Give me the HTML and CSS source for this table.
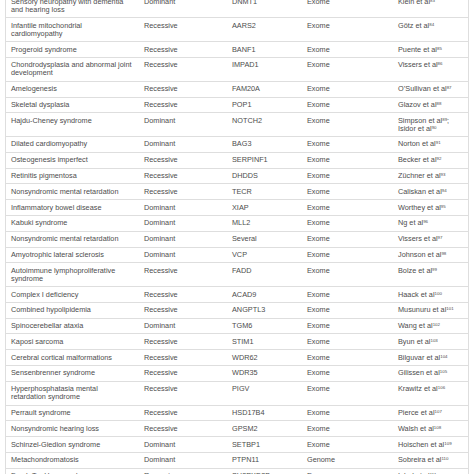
FILE: index.html
```html
<!DOCTYPE html>
<html>
<head>
<meta charset="utf-8">
<link rel="stylesheet" href="styles.css">
</head>
<body>
<div class="sheet">
<table class="genes">
<colgroup><col class="c1"><col class="c2"><col class="c3"><col class="c4"><col class="c5"></colgroup>
<tbody>
<tr><td>Sensory neuropathy with dementia<br>and hearing loss</td><td>Dominant</td><td>DNMT1</td><td>Exome</td><td>Klein et al<sup>83</sup></td></tr>
<tr><td>Infantile mitochondrial<br>cardiomyopathy</td><td>Recessive</td><td>AARS2</td><td>Exome</td><td>Götz et al<sup>84</sup></td></tr>
<tr><td>Progeroid syndrome</td><td>Recessive</td><td>BANF1</td><td>Exome</td><td>Puente et al<sup>85</sup></td></tr>
<tr><td>Chondrodysplasia and abnormal joint<br>development</td><td>Recessive</td><td>IMPAD1</td><td>Exome</td><td>Vissers et al<sup>86</sup></td></tr>
<tr><td>Amelogenesis</td><td>Recessive</td><td>FAM20A</td><td>Exome</td><td>O’Sullivan et al<sup>87</sup></td></tr>
<tr><td>Skeletal dysplasia</td><td>Recessive</td><td>POP1</td><td>Exome</td><td>Glazov et al<sup>88</sup></td></tr>
<tr><td>Hajdu-Cheney syndrome</td><td>Dominant</td><td>NOTCH2</td><td>Exome</td><td>Simpson et al<sup>89</sup>;<br>Isidor et al<sup>90</sup></td></tr>
<tr><td>Dilated cardiomyopathy</td><td>Dominant</td><td>BAG3</td><td>Exome</td><td>Norton et al<sup>91</sup></td></tr>
<tr><td>Osteogenesis imperfect</td><td>Recessive</td><td>SERPINF1</td><td>Exome</td><td>Becker et al<sup>92</sup></td></tr>
<tr><td>Retinitis pigmentosa</td><td>Recessive</td><td>DHDDS</td><td>Exome</td><td>Züchner et al<sup>93</sup></td></tr>
<tr><td>Nonsyndromic mental retardation</td><td>Recessive</td><td>TECR</td><td>Exome</td><td>Caliskan et al<sup>94</sup></td></tr>
<tr><td>Inflammatory bowel disease</td><td>Dominant</td><td>XIAP</td><td>Exome</td><td>Worthey et al<sup>95</sup></td></tr>
<tr><td>Kabuki syndrome</td><td>Dominant</td><td>MLL2</td><td>Exome</td><td>Ng et al<sup>96</sup></td></tr>
<tr><td>Nonsyndromic mental retardation</td><td>Dominant</td><td>Several</td><td>Exome</td><td>Vissers et al<sup>97</sup></td></tr>
<tr><td>Amyotrophic lateral sclerosis</td><td>Dominant</td><td>VCP</td><td>Exome</td><td>Johnson et al<sup>98</sup></td></tr>
<tr><td>Autoimmune lymphoproliferative<br>syndrome</td><td>Recessive</td><td>FADD</td><td>Exome</td><td>Bolze et al<sup>99</sup></td></tr>
<tr><td>Complex I deficiency</td><td>Recessive</td><td>ACAD9</td><td>Exome</td><td>Haack et al<sup>100</sup></td></tr>
<tr><td>Combined hypolipidemia</td><td>Recessive</td><td>ANGPTL3</td><td>Exome</td><td>Musunuru et al<sup>101</sup></td></tr>
<tr><td>Spinocerebellar ataxia</td><td>Dominant</td><td>TGM6</td><td>Exome</td><td>Wang et al<sup>102</sup></td></tr>
<tr><td>Kaposi sarcoma</td><td>Recessive</td><td>STIM1</td><td>Exome</td><td>Byun et al<sup>103</sup></td></tr>
<tr><td>Cerebral cortical malformations</td><td>Recessive</td><td>WDR62</td><td>Exome</td><td>Bilguvar et al<sup>104</sup></td></tr>
<tr><td>Sensenbrenner syndrome</td><td>Recessive</td><td>WDR35</td><td>Exome</td><td>Gilissen et al<sup>105</sup></td></tr>
<tr><td>Hyperphosphatasia mental<br>retardation syndrome</td><td>Recessive</td><td>PIGV</td><td>Exome</td><td>Krawitz et al<sup>106</sup></td></tr>
<tr><td>Perrault syndrome</td><td>Recessive</td><td>HSD17B4</td><td>Exome</td><td>Pierce et al<sup>107</sup></td></tr>
<tr><td>Nonsyndromic hearing loss</td><td>Recessive</td><td>GPSM2</td><td>Exome</td><td>Walsh et al<sup>108</sup></td></tr>
<tr><td>Schinzel-Giedion syndrome</td><td>Dominant</td><td>SETBP1</td><td>Exome</td><td>Hoischen et al<sup>109</sup></td></tr>
<tr><td>Metachondromatosis</td><td>Dominant</td><td>PTPN11</td><td>Genome</td><td>Sobreira et al<sup>110</sup></td></tr>
<tr><td>Frank-Ter Haar syndrome</td><td>Recessive</td><td>SH3PXD2B</td><td>Exome</td><td>Iqbal et al<sup>111</sup></td></tr>
</tbody>
</table>
</div>
</body>
</html>
```

FILE: styles.css
```css
html, body {
  margin: 0;
  padding: 0;
  background: #ffffff;
  overflow: hidden;
}

.sheet {
  margin: -5.4px 0 0 5px;
  width: 462px;
  border-left: 1px solid #dedede;
  border-right: 1px solid #dedede;
}

.genes {
  width: 100%;
  table-layout: fixed;
  border-collapse: separate;
  border-spacing: 0;
  font-family: "Liberation Sans", Arial, sans-serif;
  font-size: 7.3px;
  line-height: 8px;
  color: #4d4d4d;
}

.c1 { width: 132px; }
.c2 { width: 88px; }
.c3 { width: 75px; }
.c4 { width: 91px; }
.c5 { width: 76px; }

.genes td {
  vertical-align: top;
  padding: 3.4px 2px 3.4px 6px;
  border-bottom: 1px solid #dedede;
}

.genes td:first-child {
  padding-left: 5px;
}

.genes sup {
  font-size: 4.4px;
  line-height: 0;
  vertical-align: 2.4px;
}
```
